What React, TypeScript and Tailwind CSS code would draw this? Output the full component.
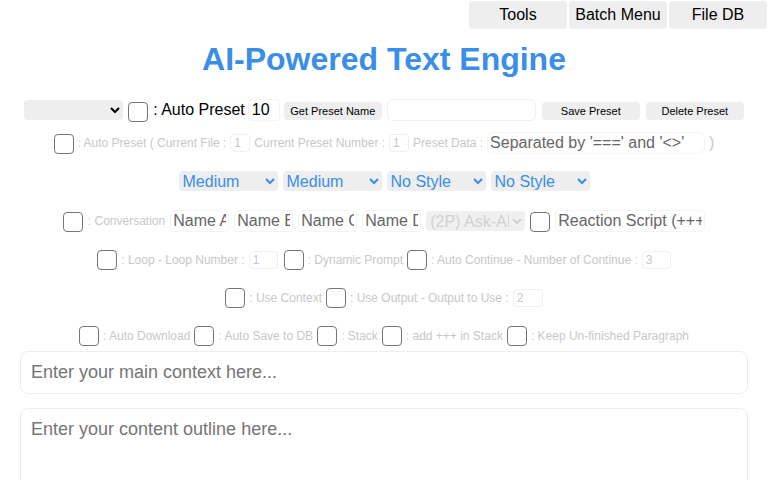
import { useState } from "react";

const navItems = ["Tools", "Batch Menu", "File DB"];
const levels = ["Medium", "Medium", "No Style", "No Style"];
const names = ["Name A", "Name B", "Name C", "Name D"];

function Check({ className = "" }: { className?: string }) {
  return (
    <input
      type="checkbox"
      className={`appearance-none w-5 h-5 shrink-0 rounded-[4px] border border-[#767676] bg-white ${className}`}
    />
  );
}

function Faint({ children }: { children: React.ReactNode }) {
  return <span className="text-[12px] text-[#c8c8c8] whitespace-pre">{children}</span>;
}

function SmallNum({ value, w = "w-[20px]" }: { value: string; w?: string }) {
  return (
    <input
      defaultValue={value}
      className={`${w} h-[18px] px-[3px] text-[12px] text-[#c8c8c8] border border-[#f0f0f0] rounded-[4px] outline-none`}
    />
  );
}

export default function App() {
  const [preset, setPreset] = useState("10");

  return (
    <div className="w-[768px] h-[480px] overflow-hidden bg-white font-['Liberation_Sans',Arial,sans-serif] text-black">
      {/* top menu */}
      <nav className="flex justify-end gap-[2px] pt-[1px] pr-[1px]">
        {navItems.map((item) => (
          <button
            key={item}
            className="w-[98px] h-[28px] rounded-[4px] bg-[#eeeeee] text-[16px] leading-none"
          >
            {item}
          </button>
        ))}
      </nav>

      <h1 className="mt-[12px] text-center text-[32px] leading-[37px] font-bold text-[#3a8ee6]">
        AI-Powered Text Engine
      </h1>

      {/* preset controls */}
      <div className="mt-[20px] h-[24px] flex items-center justify-center">
        <select className="w-[99px] h-[20px] rounded-[4px] bg-[#eeeeee] border-0 text-[14px] outline-none">
          <option></option>
        </select>
        <Check className="ml-[5px] mt-[4px]" />
        <span className="ml-[5px] text-[16px] whitespace-pre">: Auto Preset</span>
        <input
          value={preset}
          onChange={(e) => setPreset(e.target.value)}
          className="ml-[3px] w-[32px] h-[22px] px-[3px] text-[16px] border border-[#f4f4f4] rounded-[4px] outline-none"
        />
        <button className="ml-[4px] w-[98px] h-[18px] mt-[2px] rounded-[4px] bg-[#eeeeee] text-[11px] leading-none">
          Get Preset Name
        </button>
        <input className="ml-[5px] w-[149px] h-[22px] border border-[#f0f0f0] rounded-[6px] outline-none" />
        <button className="ml-[6px] w-[98px] h-[18px] mt-[2px] rounded-[4px] bg-[#eeeeee] text-[11px] leading-none">
          Save Preset
        </button>
        <button className="ml-[6px] w-[98px] h-[18px] mt-[2px] rounded-[4px] bg-[#eeeeee] text-[11px] leading-none">
          Delete Preset
        </button>
      </div>

      <div className="mt-[9px] h-[24px] flex items-center justify-center gap-[4px]">
        <Check className="mt-[2px]" />
        <Faint>: Auto Preset ( Current File :</Faint>
        <SmallNum value="1" />
        <Faint>Current Preset Number :</Faint>
        <SmallNum value="1" />
        <Faint>Preset Data :</Faint>
        <input
          placeholder="Separated by '===' and '<>'"
          className="w-[218px] h-[22px] px-[2px] text-[16px] placeholder:text-[#666666] border border-[#f4f4f4] rounded-[6px] outline-none"
        />
        <span className="text-[16px] text-[#c8c8c8]">)</span>
      </div>

      {/* style selectors */}
      <div className="mt-[14px] h-[24px] flex items-center justify-center gap-[5px]">
        {levels.map((l, i) => (
          <select
            key={i}
            defaultValue={l}
            className="w-[99px] h-[20px] rounded-[4px] bg-[#eeeeee] border-0 text-[16px] text-[#3a8ee6] outline-none"
          >
            <option>{l}</option>
          </select>
        ))}
      </div>

      {/* conversation */}
      <div className="mt-[16px] h-[24px] flex items-center justify-center gap-[5px]">
        <Check className="mt-[2px]" />
        <Faint>: Conversation</Faint>
        {names.map((n) => (
          <input
            key={n}
            placeholder={n}
            className="w-[59px] h-[22px] px-[2px] text-[16px] placeholder:text-[#666666] border border-[#f4f4f4] rounded-[4px] outline-none"
          />
        ))}
        <select
          disabled
          className="w-[99px] h-[20px] rounded-[4px] bg-[#f0f0f0] border-0 text-[16px] text-[#d0d0d0] outline-none"
        >
          <option>(2P) Ask-AI</option>
        </select>
        <Check className="mt-[2px]" />
        <input
          placeholder="Reaction Script (+++"
          className="w-[150px] h-[22px] px-[2px] text-[16px] placeholder:text-[#666666] border border-[#f4f4f4] rounded-[4px] outline-none"
        />
      </div>

      {/* loop options */}
      <div className="mt-[15px] h-[24px] flex items-center justify-center gap-[4px]">
        <Check />
        <Faint>: Loop - Loop Number :</Faint>
        <SmallNum value="1" w="w-[29px]" />
        <Check className="ml-[2px]" />
        <Faint>: Dynamic Prompt</Faint>
        <Check />
        <Faint>: Auto Continue - Number of Continue :</Faint>
        <SmallNum value="3" w="w-[29px]" />
      </div>

      <div className="mt-[14px] h-[24px] flex items-center justify-center gap-[4px]">
        <Check />
        <Faint>: Use Context</Faint>
        <Check />
        <Faint>: Use Output - Output to Use :</Faint>
        <SmallNum value="2" w="w-[30px]" />
      </div>

      <div className="mt-[14px] h-[24px] flex items-center justify-center gap-[4px]">
        <Check />
        <Faint>: Auto Download</Faint>
        <Check />
        <Faint>: Auto Save to DB</Faint>
        <Check />
        <Faint>: Stack</Faint>
        <Check />
        <Faint>: add +++ in Stack</Faint>
        <Check />
        <Faint>: Keep Un-finished Paragraph</Faint>
      </div>

      {/* main text areas */}
      <div className="mt-[3px] px-[20px] flex flex-col gap-[14px]">
        <textarea
          placeholder="Enter your main context here..."
          className="h-[43px] resize-none px-[10px] py-[9px] text-[18px] leading-[22px] placeholder:text-[#757575] border border-[#eeeeee] rounded-[8px] outline-none"
        />
        <textarea
          placeholder="Enter your content outline here..."
          className="h-[120px] resize-none px-[10px] py-[9px] text-[18px] leading-[22px] placeholder:text-[#757575] border border-[#eeeeee] rounded-[8px] outline-none"
        />
      </div>
    </div>
  );
}
